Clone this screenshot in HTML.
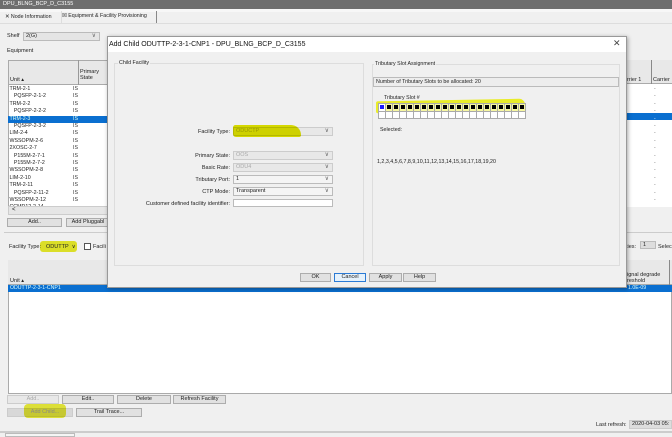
<!DOCTYPE html>
<html><head><meta charset="utf-8"><style>
*{box-sizing:border-box;margin:0;padding:0}
body{width:672px;height:437px;overflow:hidden;background:#f0f0f0;font-family:"Liberation Sans",sans-serif;font-size:5.5px;color:#222;position:relative}
.a{position:absolute}
.btn{position:absolute;background:#e1e1e1;border:1px solid #adadad;text-align:center;line-height:7px;font-size:5.5px}
.in{position:absolute;background:#fff;border:1px solid #bbb;font-size:5.5px;line-height:7px;padding-left:2px}
.dis{background:#e8e8e8;color:#aaa;border-color:#ccc}
.row{position:absolute;left:0;height:7.4px;line-height:7.4px;font-size:5.3px;white-space:nowrap}
.lab{position:absolute;right:0;text-align:right;font-size:5.5px}
.dd{position:absolute;right:3px;top:0;font-size:6px;color:#666}
.hl{mix-blend-mode:multiply}
</style></head><body>
<div class="a" style="left:0;top:0;width:672px;height:9px;background:#6e6e6e;color:#fff;font-size:5.5px;line-height:9px;padding-left:3px">DPU_BLNG_BCP_D_C3155</div>
<div class="a" style="left:0;top:9px;width:672px;height:3px;background:#f7f7f7"></div>
<div class="a" style="left:5px;top:12px;width:56px;height:11px;line-height:11px;font-size:5.3px">&#x2715; Node Information</div>
<div class="a" style="left:61px;top:11px;width:96px;height:12px;line-height:11px;font-size:5.3px;border-right:1px solid #888;border-left:1px solid #ddd">&#x2612; Equipment &amp; Facility Provisioning</div>
<div class="a" style="left:0;top:23px;width:672px;height:1px;background:#ddd"></div>
<div class="a" style="left:7px;top:33px;font-size:5.5px">Shelf</div>
<div class="in" style="left:23px;top:32px;width:77px;height:9px;background:#e5e5e5">2(G)<span class="dd">&#x2228;</span></div>
<div class="a" style="left:7px;top:48px">Equipment</div>
<div class="a" style="left:8px;top:60px;width:100px;height:155px;background:#fff;border:1px solid #aaa"></div>
<div class="a" style="left:8px;top:60px;width:100px;height:25px;background:#e8e8e8;border:1px solid #aaa"></div>
<div class="a" style="left:78px;top:60px;width:1px;height:25px;background:#999"></div>
<div class="a" style="left:10px;top:77px">Unit ▴</div>
<div class="a" style="left:80px;top:69px;line-height:6px">Primary<br>State</div>
<div class="a" style="left:8px;top:86px;width:100px;height:120px;overflow:hidden">
<div class="row" style="top:0">&nbsp;TRM-2-1</div>
<div class="row" style="top:7.4px">&nbsp;&nbsp;&nbsp;&nbsp;PQSFP-2-1-2</div>
<div class="row" style="top:14.8px">&nbsp;TRM-2-2</div>
<div class="row" style="top:22.2px">&nbsp;&nbsp;&nbsp;&nbsp;PQSFP-2-2-2</div>
<div class="row" style="top:29.6px;width:100px;background:#0a6fd0;color:#dfe">&nbsp;TRM-2-3</div>
<div class="row" style="top:37px">&nbsp;&nbsp;&nbsp;&nbsp;PQSFP-2-3-2</div>
<div class="row" style="top:44.4px">&nbsp;LIM-2-4</div>
<div class="row" style="top:51.8px">&nbsp;WSSOPM-2-6</div>
<div class="row" style="top:59.2px">&nbsp;2XOSC-2-7</div>
<div class="row" style="top:66.6px">&nbsp;&nbsp;&nbsp;&nbsp;P155M-2-7-1</div>
<div class="row" style="top:74px">&nbsp;&nbsp;&nbsp;&nbsp;P155M-2-7-2</div>
<div class="row" style="top:81.4px">&nbsp;WSSOPM-2-8</div>
<div class="row" style="top:88.8px">&nbsp;LIM-2-10</div>
<div class="row" style="top:96.2px">&nbsp;TRM-2-11</div>
<div class="row" style="top:103.6px">&nbsp;&nbsp;&nbsp;&nbsp;PQSFP-2-11-2</div>
<div class="row" style="top:111px">&nbsp;WSSOPM-2-12</div>
<div class="row" style="top:118.4px">&nbsp;CCMD12-2-14</div>
</div>
<div class="a" style="left:73px;top:86px;width:30px;height:120px;font-size:5.3px;line-height:7.4px;color:#333">IS<br>IS<br>IS<br>IS<br><span style="color:#dfe">IS</span><br>IS<br>IS<br>IS<br>IS<br>IS<br>IS<br>IS<br>IS<br>IS<br>IS<br>IS</div>
<div class="a" style="left:8px;top:206px;width:100px;height:9px;background:#e6e6e6;border:1px solid #ccc;font-size:6px;padding-left:3px">&lt;</div>
<div class="a" style="left:626px;top:60px;width:46px;height:147px;background:#fff;border-top:1px solid #aaa"></div>
<div class="a" style="left:626px;top:60px;width:46px;height:24px;background:#e8e8e8;border-bottom:1px solid #aaa"></div>
<div class="a" style="left:651px;top:60px;width:1px;height:24px;background:#888"></div>
<div class="a" style="left:627px;top:77px">rrier 1</div>
<div class="a" style="left:653px;top:77px">Carrier</div>
<div class="a" style="left:626px;top:113px;width:46px;height:7px;background:#0a6fd0"></div>
<div class="a" style="left:654px;top:86px;font-size:5px;line-height:7.4px;color:#666">-<br>-<br>-<br>-<br><span style="color:#fff">-</span><br>-<br>-<br>-<br>-<br>-<br>-<br>-<br>-<br>-<br>-<br>-</div>
<div class="btn" style="left:7px;top:218px;width:55px;height:9px">Add..</div>
<div class="btn" style="left:66px;top:218px;width:44px;height:9px">Add Pluggabl</div>
<div class="a" style="left:4px;top:232px;width:668px;height:1px;background:#ccc"></div>
<div class="a" style="left:9px;top:244px">Facility Type:</div>
<div class="a hl" style="left:40px;top:241px;width:37px;height:11px;background:#e9ec2a;border-radius:3px"></div>
<div class="a" style="left:46px;top:244px;font-size:5.5px">ODUTTP &nbsp;&#x2228;</div>
<div class="a" style="left:84px;top:243px;width:7px;height:7px;background:#fff;border:1px solid #555"></div>
<div class="a" style="left:93px;top:244px">Facili</div>
<div class="a" style="left:626px;top:244px">ties:</div>
<div class="in" style="left:640px;top:241px;width:16px;height:8px;background:#ddd">1</div>
<div class="a" style="left:658px;top:244px">Selec</div>
<div class="a" style="left:8px;top:260px;width:664px;height:134px;background:#fff;border:1px solid #aaa"></div>
<div class="a" style="left:8px;top:260px;width:664px;height:25px;background:#e8e8e8;border-bottom:1px solid #aaa"></div>
<div class="a" style="left:10px;top:278px">Unit ▴</div>
<div class="a" style="left:627px;top:272px;line-height:6px">ignal degrade<br>reshold</div>
<div class="a" style="left:669px;top:260px;width:1px;height:25px;background:#888"></div>
<div class="a" style="left:8px;top:285px;width:664px;height:7px;background:#0a6fd0;color:#dff;font-size:5.2px;line-height:7px;padding-left:2px;white-space:nowrap">ODUTTP-2-3-1-CNP1<span style="position:absolute;left:620px">1.0E-09</span></div>
<div class="btn dis" style="left:7px;top:395px;width:52px;height:9px">Add..</div>
<div class="btn" style="left:62px;top:395px;width:52px;height:9px">Edit..</div>
<div class="btn" style="left:117px;top:395px;width:54px;height:9px">Delete</div>
<div class="btn" style="left:173px;top:395px;width:53px;height:9px">Refresh Facility</div>
<div class="btn dis" style="left:7px;top:408px;width:66px;height:9px;background:#d8d8d8"></div>
<div class="a hl" style="left:24px;top:404px;width:42px;height:14px;background:#eaed3a;border-radius:4px"></div>
<div class="a" style="left:24px;top:404px;width:42px;height:14px;text-align:center;line-height:16px;color:#888">Add Child...</div>
<div class="btn" style="left:76px;top:408px;width:66px;height:9px">Trail Trace...</div>
<div class="a" style="left:596px;top:422px">Last refresh:</div>
<div class="in" style="left:629px;top:420px;width:43px;height:9px;background:#ddd;border-color:#ccc">2020-04-03 05:</div>
<div class="a" style="left:0;top:431px;width:672px;height:2px;background:#ccc"></div>
<div class="a" style="left:5px;top:433px;width:70px;height:4px;border:1px solid #bbb;background:#f5f5f5"></div>
<div class="a" style="left:107px;top:36px;width:520px;height:252px;background:#f0f0f0;border:1px solid #999;box-shadow:1px 1px 4px rgba(0,0,0,.35)">
<div class="a" style="left:0;top:0;width:518px;height:15px;background:#fff;font-size:7px;line-height:15px;padding-left:1px;color:#111">Add Child ODUTTP-2-3-1-CNP1 - DPU_BLNG_BCP_D_C3155</div>
<div class="a" style="left:505px;top:1px;font-size:9px;color:#444">&#x2715;</div>
<div class="a" style="left:6px;top:26px;width:250px;height:203px;border:1px solid #ddd"></div>
<div class="a" style="left:10px;top:23px;font-size:5.3px;background:#f0f0f0;padding:0 1px">Child Facility</div>
<div class="a" style="left:10px;top:92px;width:112px"><span class="lab" style="top:0">Facility Type:</span></div>
<div class="in dis" style="left:125px;top:90px;width:100px;height:9px">ODUCTP<span class="dd">&#x2228;</span></div>
<div class="a hl" style="left:125px;top:88px;width:68px;height:12px;background:#e3e600;border-radius:5px 20px 4px 6px"></div>
<div class="a" style="left:10px;top:116px;width:112px"><span class="lab">Primary State:</span></div>
<div class="in dis" style="left:125px;top:114px;width:100px;height:9px">OOS<span class="dd">&#x2228;</span></div>
<div class="a" style="left:10px;top:128px;width:112px"><span class="lab">Basic Rate:</span></div>
<div class="in dis" style="left:125px;top:126px;width:100px;height:9px">ODU4<span class="dd">&#x2228;</span></div>
<div class="a" style="left:10px;top:140px;width:112px"><span class="lab">Tributary Port:</span></div>
<div class="in" style="left:125px;top:138px;width:100px;height:9px;background:#f4f4f4">1<span class="dd">&#x2228;</span></div>
<div class="a" style="left:10px;top:152px;width:112px"><span class="lab">CTP Mode:</span></div>
<div class="in" style="left:125px;top:150px;width:100px;height:9px;background:#f4f4f4">Transparent<span class="dd">&#x2228;</span></div>
<div class="a" style="left:10px;top:164px;width:112px"><span class="lab">Customer defined facility identifier:</span></div>
<div class="in" style="left:125px;top:162px;width:100px;height:8px"></div>
<div class="a" style="left:264px;top:27px;width:248px;height:202px;border:1px solid #ddd"></div>
<div class="a" style="left:266px;top:24px;font-size:5.3px;background:#f0f0f0;padding:0 1px">Tributary Slot Assignment</div>
<div class="a" style="left:265px;top:40px;width:246px;height:10px;border:1px solid #bbb;background:#ededed;font-size:5.3px;line-height:9px;padding-left:2px">Number of Tributary Slots to be allocated: 20</div>
<div class="a" style="left:276px;top:58px;font-size:5.3px">Tributary Slot #</div>
<div class="a" style="left:268px;top:63px;width:149px;height:12px;background:#e9ec2a;border-radius:2px 6px 2px 2px;transform:skewY(-1deg)"></div>
<div class="a" style="left:270px;top:66px;width:148px;height:16px;display:grid;grid-template-columns:repeat(21,1fr);grid-template-rows:1fr 1fr;border:1px solid #aaa;background:#aaa;gap:1px">
<div style="background:#fff;display:flex;align-items:center;justify-content:center"><i style="width:4px;height:4px;background:#1a1aff"></i></div>
<div style="background:#f7f7a0;display:flex;align-items:center;justify-content:center"><i style="width:4px;height:4px;background:#000"></i></div><div style="background:#f7f7a0;display:flex;align-items:center;justify-content:center"><i style="width:4px;height:4px;background:#000"></i></div><div style="background:#f7f7a0;display:flex;align-items:center;justify-content:center"><i style="width:4px;height:4px;background:#000"></i></div><div style="background:#f7f7a0;display:flex;align-items:center;justify-content:center"><i style="width:4px;height:4px;background:#000"></i></div><div style="background:#f7f7a0;display:flex;align-items:center;justify-content:center"><i style="width:4px;height:4px;background:#000"></i></div><div style="background:#f7f7a0;display:flex;align-items:center;justify-content:center"><i style="width:4px;height:4px;background:#000"></i></div><div style="background:#f7f7a0;display:flex;align-items:center;justify-content:center"><i style="width:4px;height:4px;background:#000"></i></div><div style="background:#f7f7a0;display:flex;align-items:center;justify-content:center"><i style="width:4px;height:4px;background:#000"></i></div><div style="background:#f7f7a0;display:flex;align-items:center;justify-content:center"><i style="width:4px;height:4px;background:#000"></i></div><div style="background:#f7f7a0;display:flex;align-items:center;justify-content:center"><i style="width:4px;height:4px;background:#000"></i></div>
<div style="background:#f7f7a0;display:flex;align-items:center;justify-content:center"><i style="width:4px;height:4px;background:#000"></i></div><div style="background:#f7f7a0;display:flex;align-items:center;justify-content:center"><i style="width:4px;height:4px;background:#000"></i></div><div style="background:#f7f7a0;display:flex;align-items:center;justify-content:center"><i style="width:4px;height:4px;background:#000"></i></div><div style="background:#f7f7a0;display:flex;align-items:center;justify-content:center"><i style="width:4px;height:4px;background:#000"></i></div><div style="background:#f7f7a0;display:flex;align-items:center;justify-content:center"><i style="width:4px;height:4px;background:#000"></i></div><div style="background:#f7f7a0;display:flex;align-items:center;justify-content:center"><i style="width:4px;height:4px;background:#000"></i></div><div style="background:#f7f7a0;display:flex;align-items:center;justify-content:center"><i style="width:4px;height:4px;background:#000"></i></div><div style="background:#f7f7a0;display:flex;align-items:center;justify-content:center"><i style="width:4px;height:4px;background:#000"></i></div><div style="background:#f7f7a0;display:flex;align-items:center;justify-content:center"><i style="width:4px;height:4px;background:#000"></i></div><div style="background:#f7f7a0;display:flex;align-items:center;justify-content:center"><i style="width:4px;height:4px;background:#000"></i></div>
<div style="background:#fff"></div><div style="background:#fff"></div><div style="background:#fff"></div><div style="background:#fff"></div><div style="background:#fff"></div><div style="background:#fff"></div><div style="background:#fff"></div><div style="background:#fff"></div><div style="background:#fff"></div><div style="background:#fff"></div><div style="background:#fff"></div><div style="background:#fff"></div><div style="background:#fff"></div><div style="background:#fff"></div><div style="background:#fff"></div><div style="background:#fff"></div><div style="background:#fff"></div><div style="background:#fff"></div><div style="background:#fff"></div><div style="background:#fff"></div><div style="background:#fff"></div>
</div>
<div class="a" style="left:272px;top:90px;font-size:5.3px">Selected:</div>
<div class="a" style="left:269px;top:122px;font-size:5.3px">1,2,3,4,5,6,7,8,9,10,11,12,13,14,15,16,17,18,19,20</div>
<div class="btn" style="left:192px;top:236px;width:31px;height:9px">OK</div>
<div class="btn" style="left:226px;top:236px;width:32px;height:9px;border:1px solid #2a7ad5;background:#e5f1fb">Cancel</div>
<div class="btn" style="left:261px;top:236px;width:33px;height:9px">Apply</div>
<div class="btn" style="left:295px;top:236px;width:33px;height:9px">Help</div>
</div>
</body></html>
